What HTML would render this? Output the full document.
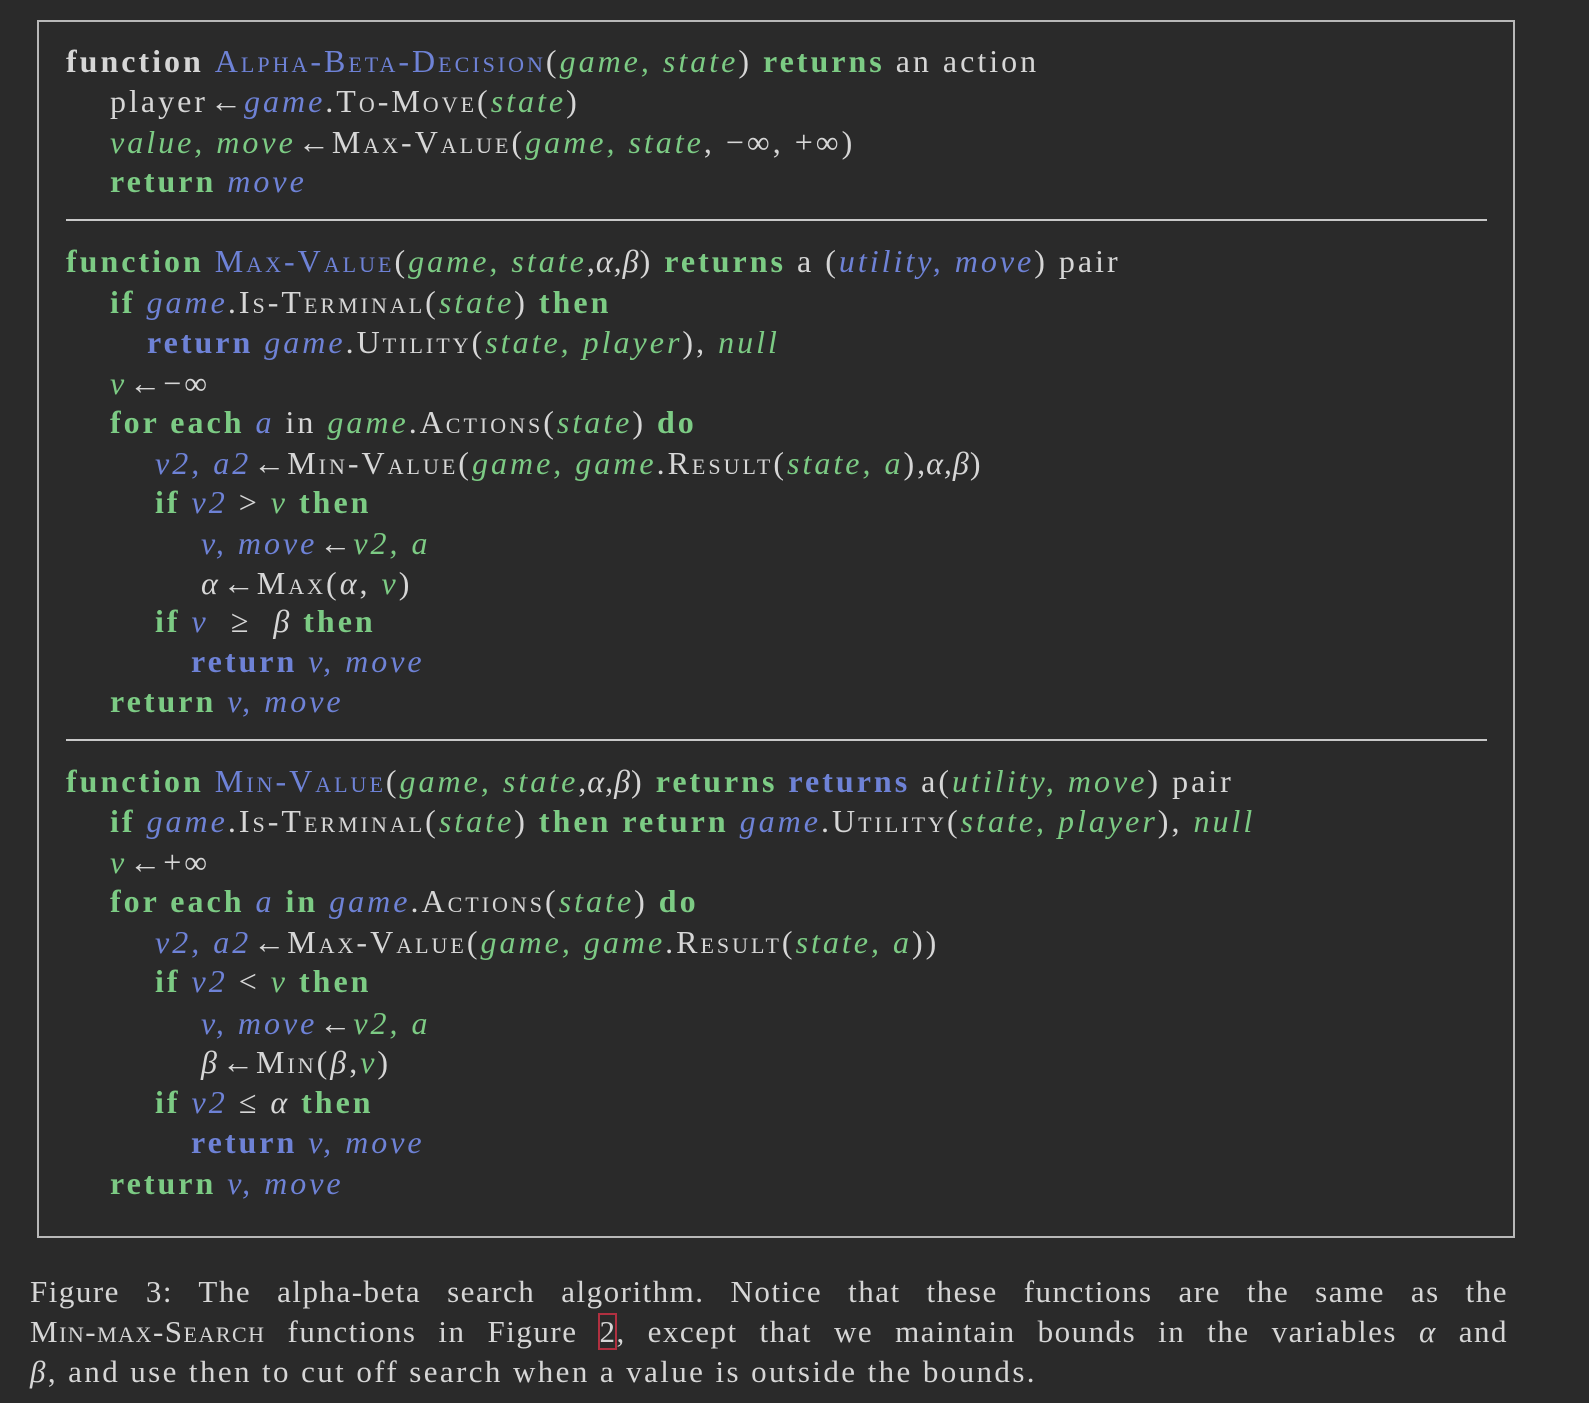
<!DOCTYPE html>
<html><head><meta charset="utf-8"><style>
body{margin:0;background:#2a2a2a;width:1589px;height:1403px;overflow:hidden;font-family:"Liberation Serif",serif;color:#d6d6d6;font-size:32px;letter-spacing:3px}
.box{position:absolute;left:37px;top:20px;width:1474px;height:1214px;border:2px solid #b8b8b8}
.l{position:absolute;white-space:nowrap;line-height:40px}
.hr{position:absolute;left:66px;width:1421px;height:2px;background:#c8c8c8}
.g{color:#7ccb84}.b{color:#6e82d6}.w{color:#d6d6d6}
.k{font-weight:bold}.i{font-style:italic}.sc{font-variant:small-caps}
.a{letter-spacing:0;margin:0 2px}
.t{letter-spacing:1px}
.cap{position:absolute;left:30px;width:1478px;line-height:40px;font-size:31px;letter-spacing:1.5px;text-align:justify;text-align-last:justify;white-space:nowrap}
</style></head><body>
<div class="box"></div>
<div class="l" style="left:66px;top:41px"><span class="k w">function</span> <span class="b sc">Alpha-Beta-Decision</span>(<span class="g i">game, state</span>) <span class="g k">returns</span> an action</div>
<div class="l" style="left:110px;top:81px">player<span class="a">←</span><span class="b i">game</span>.<span class="sc">To-Move</span>(<span class="g i">state</span>)</div>
<div class="l" style="left:110px;top:122px"><span class="g i">value, move</span><span class="a">←</span><span class="sc">Max-Value</span>(<span class="g i">game, state</span>, −∞, +∞)</div>
<div class="l" style="left:110px;top:161px"><span class="g k">return</span> <span class="b i">move</span></div>
<div class="hr" style="top:219px"></div>
<div class="l" style="left:66px;top:241px"><span class="g k">function</span> <span class="b sc">Max-Value</span>(<span class="g i">game, state</span><span class="t">,</span><span class="i t">α,β</span>) <span class="g k">returns</span> a (<span class="b i">utility, move</span>) pair</div>
<div class="l" style="left:110px;top:282px"><span class="g k">if</span> <span class="b i">game</span>.<span class="sc">Is-Terminal</span>(<span class="g i">state</span>) <span class="g k">then</span></div>
<div class="l" style="left:147px;top:322px"><span class="b k">return</span> <span class="b i">game</span>.<span class="sc">Utility</span>(<span class="g i">state, player</span>), <span class="g i">null</span></div>
<div class="l" style="left:110px;top:363px"><span class="g i">v</span><span class="a">←</span>−∞</div>
<div class="l" style="left:110px;top:402px"><span class="g k">for each</span> <span class="b i">a</span> in <span class="g i">game</span>.<span class="sc">Actions</span>(<span class="g i">state</span>) <span class="g k">do</span></div>
<div class="l" style="left:155px;top:443px"><span class="b i">v2, a2</span><span class="a">←</span><span class="sc">Min-Value</span>(<span class="g i">game, game</span>.<span class="sc">Result</span>(<span class="g i">state, a</span>)<span class="t">,</span><span class="i t">α,β</span>)</div>
<div class="l" style="left:155px;top:482px"><span class="g k">if</span> <span class="b i">v2</span> &gt; <span class="g i">v</span> <span class="g k">then</span></div>
<div class="l" style="left:201px;top:523px"><span class="b i">v, move</span><span class="a">←</span><span class="g i">v2, a</span></div>
<div class="l" style="left:201px;top:563px"><span class="i">α</span><span class="a">←</span><span class="sc">Max</span>(<span class="i">α</span>, <span class="g i">v</span>)</div>
<div class="l" style="left:155px;top:601px"><span class="g k">if</span> <span class="b i">v</span> &nbsp;≥ &nbsp;<span class="i">β</span> <span class="g k">then</span></div>
<div class="l" style="left:191px;top:641px"><span class="b k">return</span> <span class="b i">v, move</span></div>
<div class="l" style="left:110px;top:681px"><span class="g k">return</span> <span class="b i">v, move</span></div>
<div class="hr" style="top:739px"></div>
<div class="l" style="left:66px;top:761px"><span class="g k">function</span> <span class="b sc">Min-Value</span>(<span class="g i">game, state</span><span class="t">,</span><span class="i t">α,β</span>) <span class="g k">returns</span> <span class="b k">returns</span> a(<span class="g i">utility, move</span>) pair</div>
<div class="l" style="left:110px;top:801px"><span class="g k">if</span> <span class="b i">game</span>.<span class="sc">Is-Terminal</span>(<span class="g i">state</span>) <span class="g k">then return</span> <span class="b i">game</span>.<span class="sc">Utility</span>(<span class="g i">state, player</span>), <span class="g i">null</span></div>
<div class="l" style="left:110px;top:842px"><span class="g i">v</span><span class="a">←</span>+∞</div>
<div class="l" style="left:110px;top:881px"><span class="g k">for each</span> <span class="b i">a</span> <span class="g k">in</span> <span class="b i">game</span>.<span class="sc">Actions</span>(<span class="g i">state</span>) <span class="g k">do</span></div>
<div class="l" style="left:155px;top:922px"><span class="b i">v2, a2</span><span class="a">←</span><span class="sc">Max-Value</span>(<span class="g i">game, game</span>.<span class="sc">Result</span>(<span class="g i">state, a</span>))</div>
<div class="l" style="left:155px;top:961px"><span class="g k">if</span> <span class="b i">v2</span> &lt; <span class="g i">v</span> <span class="g k">then</span></div>
<div class="l" style="left:201px;top:1003px"><span class="b i">v, move</span><span class="a">←</span><span class="g i">v2, a</span></div>
<div class="l" style="left:201px;top:1042px"><span class="i">β</span><span class="a">←</span><span class="sc">Min</span>(<span class="i">β</span>,<span class="g i">v</span>)</div>
<div class="l" style="left:155px;top:1082px"><span class="g k">if</span> <span class="b i">v2</span> ≤ <span class="i">α</span> <span class="g k">then</span></div>
<div class="l" style="left:191px;top:1122px"><span class="b k">return</span> <span class="b i">v, move</span></div>
<div class="l" style="left:110px;top:1163px"><span class="g k">return</span> <span class="b i">v, move</span></div>
<div class="cap" style="top:1272px">Figure 3: The alpha-beta search algorithm. Notice that these functions are the same as the</div>
<div class="cap" style="top:1312px"><span class="sc">Min-max-Search</span> functions in Figure <span style="outline:2px solid #b03040;outline-offset:-1px">2</span>, except that we maintain bounds in the variables <span class="i">α</span> and</div>
<div class="cap" style="top:1352px;text-align-last:left;letter-spacing:2.4px"><span class="i">β</span>, and use then to cut off search when a value is outside the bounds.</div>
</body></html>
